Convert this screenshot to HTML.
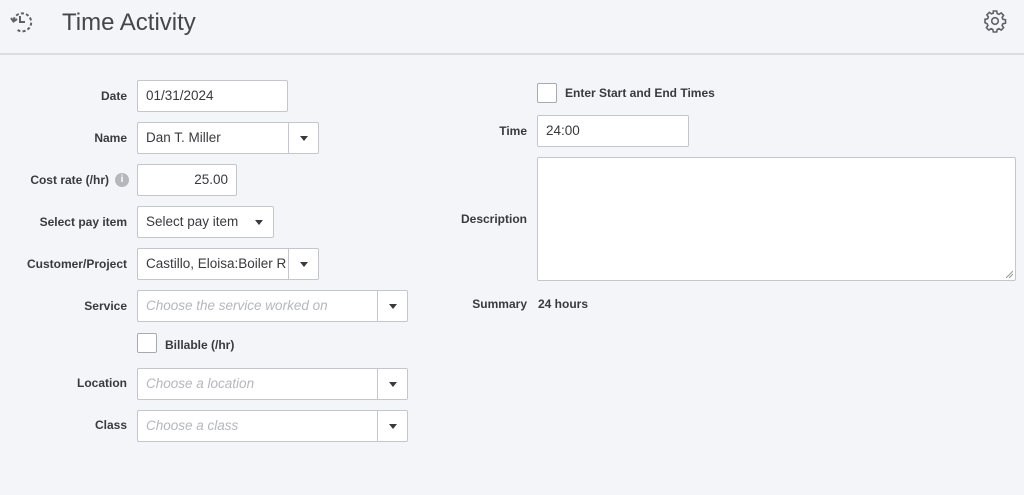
<!DOCTYPE html>
<html><head><style>
body{margin:0;width:1024px;height:495px;background:#f4f5f8;font-family:"Liberation Sans",sans-serif;position:relative;overflow:hidden}
.hdr{position:absolute;left:0;top:0;width:1024px;height:53px;border-bottom:2px solid #dcdde1}
.title{position:absolute;left:62px;top:9px;font-size:24px;color:#45464a}
.lbl{position:absolute;font-size:12px;font-weight:bold;color:#393a3d;text-align:right;width:127px;left:0}
.in{position:absolute;background:#fff;border:1px solid #c4c6cb;border-radius:2px;box-sizing:border-box;font-size:13.5px;color:#393a3d;padding:0 8px;line-height:29px;white-space:nowrap;overflow:hidden}
.ph{color:#b5b7bc;font-style:italic}
.dd{position:absolute;top:0;bottom:0;right:0;width:29px;border-left:1px solid #c4c6cb;background:#fff}
.dd:after,.ar:after{content:"";position:absolute;left:50%;top:50%;margin:-2px 0 0 -4px;border:4px solid transparent;border-top:5px solid #393a3d;border-bottom:0}
.ar{position:absolute;top:0;bottom:0;right:8px;width:12px}
.cb{position:absolute;width:19px;height:19px;border:1px solid #a8aaaf;border-radius:2px;background:#fff;box-sizing:border-box}
</style></head><body>
<div class="hdr"></div>
<svg style="position:absolute;left:9px;top:9px" width="26" height="26" viewBox="0 0 26 26" fill="none" stroke="#5f6166" stroke-width="2"><path d="M4.5 11a9 9 0 1 1 4 10" stroke-dasharray="3 2.2"/><path d="M2 9l2.5 3.5 3.5-2.5"/><path d="M11 7v6h5"/></svg>
<div class="title">Time Activity</div>
<svg style="position:absolute;left:983px;top:9px" width="24" height="24" viewBox="0 0 24 24" fill="none" stroke="#5f6166" stroke-width="1.6"><path d="M10.3 2h3.4l.5 2.6 1.8.8 2.2-1.5 2.4 2.4-1.5 2.2.8 1.8 2.6.5v3.4l-2.6.5-.8 1.8 1.5 2.2-2.4 2.4-2.2-1.5-1.8.8-.5 2.6h-3.4l-.5-2.6-1.8-.8-2.2 1.5-2.4-2.4 1.5-2.2-.8-1.8L2 13.7v-3.4l2.6-.5.8-1.8-1.5-2.2 2.4-2.4 2.2 1.5 1.8-.8z"/><circle cx="12" cy="12" r="3.3"/></svg>

<div class="lbl" style="top:89px">Date</div>
<div class="in" style="left:137px;top:80px;width:151px;height:32px">01/31/2024</div>
<div class="lbl" style="top:131px">Name</div>
<div class="in" style="left:137px;top:122px;width:182px;height:32px">Dan T. Miller<div class="dd"></div></div>
<div class="lbl" style="top:173px;width:109px">Cost rate (/hr)</div>
<div style="position:absolute;left:115px;top:173px;width:14px;height:14px;border-radius:50%;background:#b5b7bc;color:#fff;font-size:10px;font-weight:bold;text-align:center;line-height:14px">i</div>
<div class="in" style="left:137px;top:164px;width:100px;height:32px;text-align:right">25.00</div>
<div class="lbl" style="top:215px">Select pay item</div>
<div class="in" style="left:137px;top:206px;width:137px;height:32px">Select pay item<div class="ar"></div></div>
<div class="lbl" style="top:257px">Customer/Project</div>
<div class="in" style="left:137px;top:248px;width:182px;height:32px">Castillo, Eloisa:Boiler R<div class="dd"></div></div>
<div class="lbl" style="top:299px">Service</div>
<div class="in ph" style="left:137px;top:290px;width:271px;height:32px">Choose the service worked on<div class="dd"></div></div>
<div class="cb" style="left:137px;top:333px;width:20px;height:20px"></div>
<div class="lbl" style="left:165px;top:338px;text-align:left;width:auto">Billable (/hr)</div>
<div class="lbl" style="top:376px">Location</div>
<div class="in ph" style="left:137px;top:368px;width:271px;height:32px">Choose a location<div class="dd"></div></div>
<div class="lbl" style="top:418px">Class</div>
<div class="in ph" style="left:137px;top:410px;width:271px;height:32px">Choose a class<div class="dd"></div></div>

<div class="cb" style="left:537px;top:83px;width:20px;height:20px"></div>
<div class="lbl" style="left:565px;top:86px;text-align:left;width:auto">Enter Start and End Times</div>
<div class="lbl" style="left:400px;top:124px">Time</div>
<div class="in" style="left:537px;top:115px;width:152px;height:32px">24:00</div>
<div class="lbl" style="left:400px;top:212px">Description</div>
<div class="in" style="left:537px;top:157px;width:479px;height:124px"><svg style="position:absolute;right:2px;bottom:2px" width="7" height="7" stroke="#999"><path d="M0 7L7 0M3 7L7 3"/></svg></div>
<div class="lbl" style="left:400px;top:297px">Summary</div>
<div class="lbl" style="left:538px;top:297px;text-align:left;width:auto">24 hours</div>
</body></html>
